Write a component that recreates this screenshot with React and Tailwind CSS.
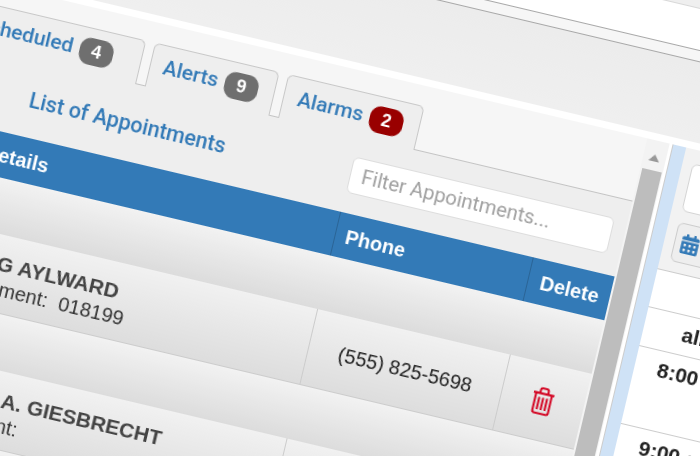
import { FaCalendarAlt } from "react-icons/fa";

const TrashIcon = () => (
  <svg width="23" height="28" viewBox="0 0 23 28" fill="none" stroke="#d3001f" strokeWidth="2">
    <path d="M1 6.5h21" strokeWidth="2.2" />
    <path d="M7.5 6V3.2C7.5 2 8.2 1.2 9.4 1.2h4.2c1.2 0 1.9.8 1.9 2V6" />
    <path d="M3.5 7v17.5c0 1.3.9 2.3 2.2 2.3h11.6c1.3 0 2.2-1 2.2-2.3V7" />
    <path d="M7.5 10.5v12.5M11.5 10.5v12.5M15.5 10.5v12.5" />
  </svg>
);

const Tab = ({ label, count, width, badge, padding }) => (
  <div
    className={`${width} ${padding} h-[45px] flex items-center justify-end gap-[7px] bg-[#eeeeee] border border-b-0 border-[#c8c8c8] rounded-t-[6px]`}
  >
    <span className="text-[21px] font-medium text-[#337ab7] font-['Roboto',sans-serif]">{label}</span>
    <span className={`${badge} w-[34px] h-[27px] rounded-[11px] flex items-center justify-center text-white text-[18px] font-bold font-['Liberation_Sans',sans-serif]`}>
      {count}
    </span>
  </div>
);

const SpacerRow = () => (
  <div className="h-[55px] shrink-0 bg-linear-to-b from-[#f2f2f2] to-[#dcdcdc]" />
);

const AppointmentRow = ({ name, appointment, phone }) => (
  <div className="h-[78px] shrink-0 flex bg-linear-to-b from-[#f1f1f1] to-[#dddddd] border-b border-[#cccccc] text-[#222222]">
    <div className="w-[420px] pt-[16px]">
      <div className="pl-[47px] text-[21px] leading-[26px] font-bold text-[#444444] whitespace-nowrap">{name}</div>
      <div className="pl-[38px] text-[20px] leading-[24px] text-[#333333] whitespace-nowrap">{appointment}</div>
    </div>
    <div className="w-[198px] border-l border-[#cccccc] flex items-center justify-center text-[20px]">{phone}</div>
    <div className="w-[84px] pb-[2px] border-l border-[#cccccc] flex items-center justify-center">
      <TrashIcon />
    </div>
  </div>
);

const TimeRow = ({ height, inset, children }) => (
  <div className={`${height} ${inset} pt-[3px] border-b border-[#cccccc] text-[21px] font-bold text-[#222222] whitespace-nowrap`}>
    {children}
  </div>
);

export default function App() {
  return (
    <div className="w-[700px] h-[456px] overflow-hidden bg-[#eeeeee] font-['Liberation_Sans',sans-serif]">
      {/* whole page is tilted, like a photo of the screen */}
      <div className="w-[840px] h-[640px] -mt-[175px] origin-top-left rotate-[13.3deg] blur-[0.4px] flex flex-col">
        {/* browser chrome strip */}
        <div className="h-[18px] shrink-0 bg-[#efefef] border-b border-[#d8d8d8]" />
        <div className="h-[41px] shrink-0 bg-white border-b border-[#a8a8a8]" />
        <div className="h-[11px] shrink-0 bg-[#f6f6f6] border-b border-[#a8a8a8]" />
        <div className="h-[79px] shrink-0 bg-linear-to-b from-[#ececec] to-[#efefef]" />
        <div className="h-[7px] shrink-0 bg-white" />

        <div className="flex-1 flex min-h-0">
          {/* left panel */}
          <div className="w-[702px] shrink-0 flex flex-col overflow-hidden bg-[#eeeeee]">
            <div className="h-[65px] shrink-0 pt-[20px] pl-[17px] flex gap-[9px] bg-[#f6f6f6] border-b border-[#c4c4c4]">
              <Tab label="Scheduled" count="4" width="w-[175px]" padding="pr-[28px]" badge="bg-[#6f6f6f]" />
              <Tab label="Alerts" count="9" width="w-[128px]" padding="pr-[16px]" badge="bg-[#6f6f6f]" />
              <Tab label="Alarms" count="2" width="w-[140px]" padding="pr-[16px]" badge="bg-[#990000]" />
            </div>

            <div className="h-[77px] shrink-0 flex">
              <div className="w-[421px] pl-[92px] pt-[24px] text-[21.5px] font-medium text-[#337ab7] font-['Roboto',sans-serif] whitespace-nowrap">
                List of Appointments
              </div>
              <div className="w-[268px] h-[37px] mt-[20px] pl-[11px] flex items-center bg-white border border-[#dddddd] rounded-[6px] text-[20.3px] text-[#a0a0a0] font-['Roboto',sans-serif] whitespace-nowrap">
                Filter Appointments...
              </div>
            </div>

            <div className="h-[45px] shrink-0 flex items-center bg-[#337ab7] text-white text-[20px] font-bold">
              <div className="w-[420px] pl-[60px]">Details</div>
              <div className="w-[198px] h-full pl-[10px] flex items-center border-l border-[#2a6496]">Phone</div>
              <div className="w-[84px] h-full pl-[12px] flex items-center border-l border-[#2a6496]">Delete</div>
            </div>

            <SpacerRow />
            <AppointmentRow name="CRAIG AYLWARD" appointment="Appointment:&nbsp; 018199" phone="(555) 825-5698" />
            <SpacerRow />
            <AppointmentRow name="MARTIN A. GIESBRECHT" appointment="Appointment:" phone="(555) 410-2276" />
            <SpacerRow />
          </div>

          {/* scrollbar */}
          <div className="w-[23px] shrink-0 flex flex-col items-center bg-[#f3f3f3]">
            <svg className="mt-[14px] shrink-0" width="11" height="7" viewBox="0 0 11 7">
              <path d="M5.5 0L11 7H0z" fill="#999999" />
            </svg>
            <div className="w-[20px] flex-1 mt-[9px] bg-[#bdbdbd]" />
          </div>
          <div className="w-[4px] shrink-0 bg-white border-r border-[#cccccc]" />
          <div className="w-[13px] shrink-0 bg-[#cfe2f6]" />

          {/* right panel */}
          <div className="flex-1 flex flex-col bg-[#f2f2f2]">
            <div className="h-[125px] shrink-0 pl-[10px] pt-[14px] flex flex-col gap-[11px] border-b border-[#cccccc]">
              <div className="h-[49px] bg-white border border-[#d4d4d4] rounded-[6px]" />
              <div className="h-[40px] pl-[5px] flex items-center bg-[#eeeeee] border border-[#cccccc] rounded-[6px]">
                <FaCalendarAlt className="text-[#337ab7] text-[20px]" />
              </div>
            </div>
            <div className="flex-1 bg-white">
              <TimeRow height="h-[39px]" inset="pl-[23px]" />
              <TimeRow height="h-[40px]" inset="pl-[39px]">all-day</TimeRow>
              <TimeRow height="h-[80px]" inset="pl-[23px]">8:00 am</TimeRow>
              <TimeRow height="h-[80px]" inset="pl-[23px]">9:00 am</TimeRow>
            </div>
          </div>
        </div>
      </div>
    </div>
  );
}
